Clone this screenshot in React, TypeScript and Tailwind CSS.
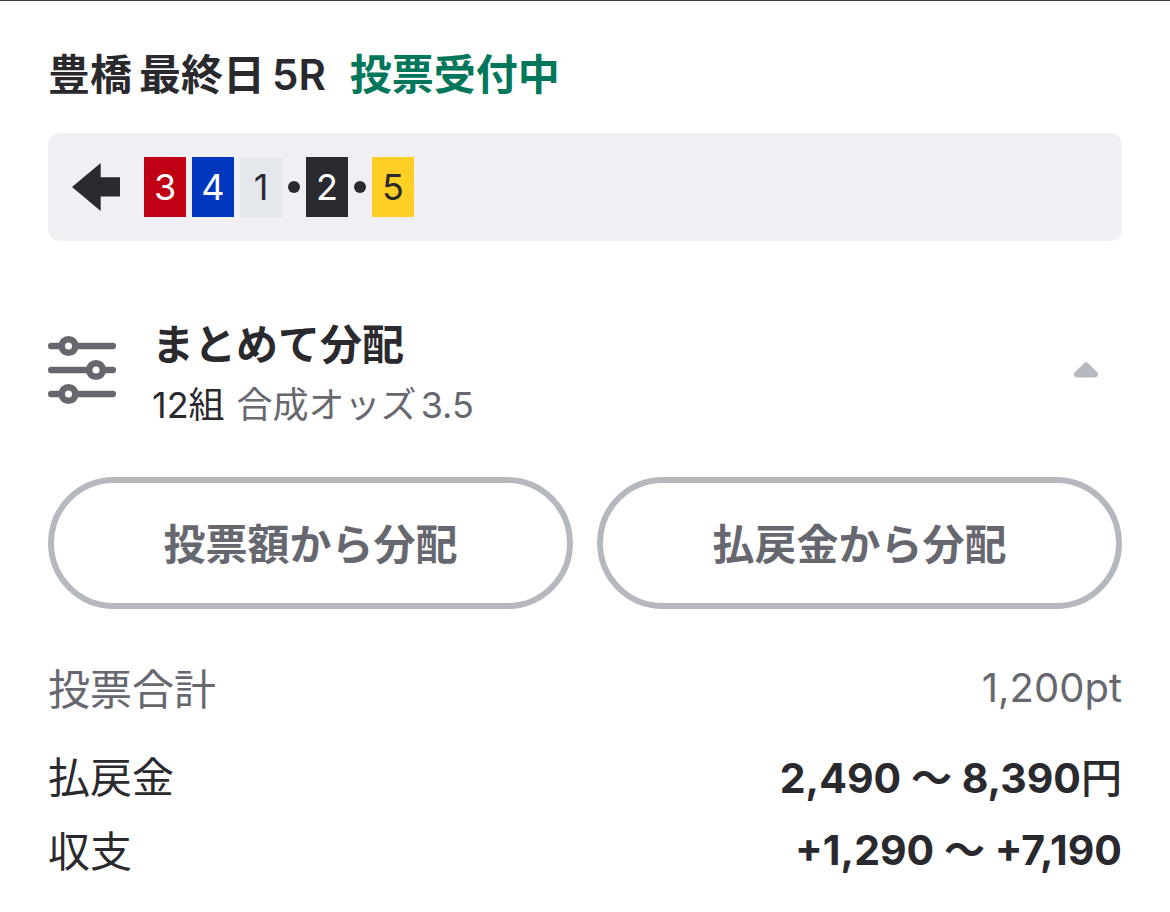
import React, { useState } from "react";

type BadgeProps = {
  number: number;
  className: string;
};

function CarBadge({ number, className }: BadgeProps) {
  return (
    <span
      className={`flex h-[60px] w-[42px] items-center justify-center text-4xl ${className}`}
    >
      {number}
    </span>
  );
}

function Dot() {
  return <span className="size-3 rounded-full bg-[#2a292e]" />;
}

function ArrowIcon() {
  return (
    <svg viewBox="0 0 48 48" className="size-12" fill="#2a292e" aria-hidden="true">
      <path d="M0 24 28.700 0v14.300H48v19.200H28.700V48Z" />
    </svg>
  );
}

function SlidersIcon() {
  return (
    <svg
      viewBox="0 0 72 72"
      className="size-[72px] shrink-0"
      fill="#fff"
      stroke="#67686f"
      strokeWidth="6.600"
      strokeLinecap="round"
      aria-hidden="true"
    >
      <path d="M3.300 12h61.400M3.300 36h61.400M3.300 60h61.400" />
      <circle cx="20.500" cy="12" r="6.800" />
      <circle cx="48" cy="36" r="6.800" />
      <circle cx="20.500" cy="60" r="6.800" />
    </svg>
  );
}

function CaretIcon({ open }: { open: boolean }) {
  return (
    <svg
      viewBox="0 0 24 16"
      className={`h-4 w-6 ${open ? "" : "rotate-180"}`}
      fill="#b6b8c0"
      aria-hidden="true"
    >
      <path d="M10.200.9a2.600 2.600 0 0 1 3.600 0l9.300 9.300c2 2 .6 5.300-2.300 5.300H3.200C.3 15.500-1.100 12.200.9 10.200Z" />
    </svg>
  );
}

function OutlineButton({ children }: { children: React.ReactNode }) {
  return (
    <button
      type="button"
      className="h-[132px] flex-1 rounded-full border-6 border-[#b6b8c0] pt-1 font-semibold text-[#67686f]"
    >
      {children}
    </button>
  );
}

export default function App() {
  const [open, setOpen] = useState(true);

  return (
    <main
      lang="ja"
      className="border-t border-[#403c44] bg-white px-12 pt-11 pb-7 font-[Inter,'Noto_Sans_CJK_JP',sans-serif] text-[42px] leading-[60px] text-[#2a292e]"
    >
      <h1 className="flex flex-wrap items-center gap-x-6 font-semibold">
        <span className="flex gap-[7px]">
          <span>豊橋</span>
          <span>最終日</span>
          <span>5R</span>
        </span>
        <span className="text-[#00775a]">投票受付中</span>
      </h1>

      {/* Predicted line-up */}
      <div className="mt-7 flex items-center gap-6 rounded-xl bg-[#f0f0f4] p-6">
        <ArrowIcon />
        <div className="flex items-center gap-1.5">
          <CarBadge number={3} className="bg-[#be0012] text-white" />
          <CarBadge number={4} className="bg-[#0037be] text-white" />
          <CarBadge number={1} className="bg-[#e4e7eb]" />
          <Dot />
          <CarBadge number={2} className="bg-[#2a292e] text-white" />
          <Dot />
          <CarBadge number={5} className="bg-[#ffcf26]" />
        </div>
      </div>

      <button
        type="button"
        aria-expanded={open}
        onClick={() => setOpen(!open)}
        className="mt-16 flex w-full items-center gap-8 text-left"
      >
        <SlidersIcon />
        <span className="flex-1 pt-2.5">
          <span className="block font-semibold">まとめて分配</span>
          <span className="flex gap-3 text-4xl leading-[60px]">
            <span>12組</span>
            <span className="flex gap-1 text-[#67686f]">
              <span>合成オッズ</span>
              <span>3.5</span>
            </span>
          </span>
        </span>
        <span className="px-6">
          <CaretIcon open={open} />
        </span>
      </button>

      {open && (
        <div className="mt-[42px] flex gap-6">
          <OutlineButton>投票額から分配</OutlineButton>
          <OutlineButton>払戻金から分配</OutlineButton>
        </div>
      )}

      {/* Totals */}
      <dl className="mt-[51px]">
        <div className="flex justify-between text-[#67686f]">
          <dt>投票合計</dt>
          <dd className="text-[40px] leading-[56px]">1,200pt</dd>
        </div>
        <div className="mt-7 flex justify-between">
          <dt>払戻金</dt>
          <dd className="text-[41px] font-bold">
            2,490 〜 8,390<span className="font-medium">円</span>
          </dd>
        </div>
        <div className="mt-3.5 flex justify-between">
          <dt>収支</dt>
          <dd className="text-[41px] leading-[56px] font-bold">+1,290 〜 +7,190</dd>
        </div>
      </dl>
    </main>
  );
}
